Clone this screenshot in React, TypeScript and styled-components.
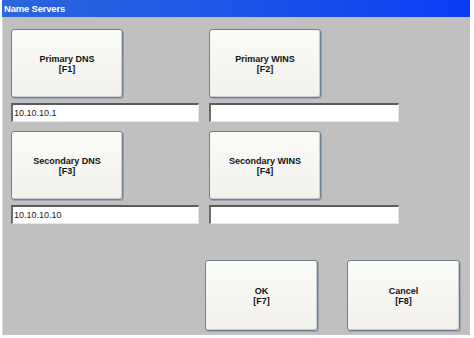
import styled, { createGlobalStyle } from 'styled-components'

const GlobalStyle = createGlobalStyle`
  html, body {
    margin: 0;
    padding: 0;
    background: #ffffff;
  }
  body {
    font-family: Tahoma, "DejaVu Sans", "Liberation Sans", sans-serif;
  }
`;

const Window = styled.div`
  margin-left: 2px;
  width: 468px;
  height: 335px;
  background: #c0c0c0;
  border-left: 1px solid #d8d8d8;
  box-sizing: border-box;
  display: flex;
  flex-direction: column;
`;

const TitleBar = styled.div`
  height: 17px;
  background: linear-gradient(to right, #2a66dc 0%, #1c55e6 50%, #0a3cf4 100%);
  color: #ffffff;
  font-family: "Liberation Sans", Arial, sans-serif;
  font-size: 9.5px;
  font-weight: bold;
  letter-spacing: -0.2px;
  display: flex;
  align-items: center;
  padding-left: 2px;
  margin-left: -1px;
`;

const Content = styled.div`
  flex: 1;
  padding: 12px 9px 0 8px;
  display: flex;
  flex-direction: column;
`;

const FieldGrid = styled.div`
  display: grid;
  grid-template-columns: 188px 190px;
  column-gap: 10px;
  row-gap: 9px;
`;

const Field = styled.div`
  display: flex;
  flex-direction: column;
  gap: 5px;
`;

const KeyButton = styled.button<{ $w?: number; $h?: number }>`
  width: ${p => p.$w ?? 112}px;
  height: ${p => p.$h ?? 69}px;
  padding: 0;
  border: 1px solid #6f8094;
  border-radius: 3px;
  background: linear-gradient(to bottom, #fbfbf8 0%, #f2f1ec 100%);
  box-shadow: inset -1px -1px 0 #c9ccd0, 1px 1px 0 #9aa2ac;
  font-family: "Liberation Sans", Arial, sans-serif;
  font-size: 9px;
  font-weight: bold;
  line-height: 10px;
  color: #111111;
  display: flex;
  flex-direction: column;
  align-items: center;
  justify-content: center;
  cursor: pointer;
`;

const TextBox = styled.div`
  height: 19px;
  box-sizing: border-box;
  background: #ffffff;
  border-top: 2px solid #5a5a5a;
  border-left: 2px solid #6a6a6a;
  border-bottom: 1px solid #e6e6e6;
  border-right: 1px solid #e6e6e6;
  font-family: "Liberation Sans", Arial, sans-serif;
  font-size: 9px;
  color: #222222;
  display: flex;
  align-items: center;
  padding-left: 1px;
`;

const Footer = styled.div`
  margin-top: 36px;
  display: flex;
  justify-content: flex-end;
  gap: 29px;
  padding-right: 1px;
`;

const fields = [
  { label: 'Primary DNS', key: 'F1', value: '10.10.10.1' },
  { label: 'Primary WINS', key: 'F2', value: '' },
  { label: 'Secondary DNS', key: 'F3', value: '10.10.10.10' },
  { label: 'Secondary WINS', key: 'F4', value: '' },
];

const App = () => {
  return (
    <>
      <GlobalStyle />
      <Window>
        <TitleBar>Name Servers</TitleBar>
        <Content>
          <FieldGrid>
            {fields.map(f => (
              <Field key={f.key}>
                <KeyButton>
                  <span>{f.label}</span>
                  <span>[{f.key}]</span>
                </KeyButton>
                <TextBox>{f.value}</TextBox>
              </Field>
            ))}
          </FieldGrid>
          <Footer>
            <KeyButton $w={113} $h={71}>
              <span>OK</span>
              <span>[F7]</span>
            </KeyButton>
            <KeyButton $w={113} $h={71}>
              <span>Cancel</span>
              <span>[F8]</span>
            </KeyButton>
          </Footer>
        </Content>
      </Window>
    </>
  )
}

export default App;
